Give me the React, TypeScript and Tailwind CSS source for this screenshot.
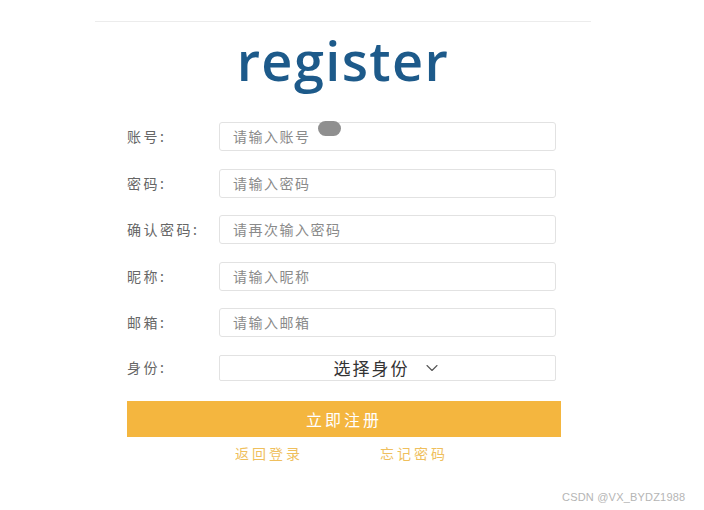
import { ChevronDown } from 'lucide-react';

const fields = [
  { label: '账号:', placeholder: '请输入账号' },
  { label: '密码:', placeholder: '请输入密码' },
  { label: '确认密码:', placeholder: '请再次输入密码' },
  { label: '昵称:', placeholder: '请输入昵称' },
  { label: '邮箱:', placeholder: '请输入邮箱' },
];

const font = { fontFamily: '"Noto Sans CJK SC", "Noto Sans", sans-serif' };

export default function App() {
  return (
    <div className="relative w-[704px] h-[510px] bg-white overflow-hidden" style={font}>
      <div className="ml-[95px] w-[496px] pt-[21px]">
        <div className="h-px bg-[#ececec]" />

        <h1
          className="mt-[7px] h-[62px] text-center text-[54px] leading-[62px] font-semibold tracking-[1.4px] text-[#1d5a8a]"
          style={{ fontFamily: '"Open Sans", "Noto Sans", sans-serif' }}
        >
          register
        </h1>

        {/* form */}
        <div className="ml-[32px] mt-[31px] flex flex-col gap-[17.6px]">
          {fields.map((f) => (
            <div key={f.label} className="flex items-center h-[29px]">
              <span className="w-[92px] text-[14px] tracking-[2.5px] text-[#666]">{f.label}</span>
              <div className="w-[337px] h-[29px] flex items-center border border-[#e2e2e2] rounded-[3px] pl-[13px] text-[14px] tracking-[1.5px] text-[#8a8a8a]">
                {f.placeholder}
              </div>
            </div>
          ))}
          <div className="flex items-center h-[26px]">
            <span className="w-[92px] text-[14px] tracking-[2.5px] text-[#666]">身份:</span>
            <div className="w-[337px] h-[26px] flex items-center justify-center gap-[12px] border border-[#e2e2e2] rounded-[2px] text-[17px] tracking-[2px] text-[#333]">
              <span>选择身份</span>
              <ChevronDown size={20} strokeWidth={1.3} className="text-[#555]" />
            </div>
          </div>
        </div>

        <div className="ml-[32px] mt-[20px] w-[434px] h-[36px] bg-[#f4b63f] flex items-center justify-center text-[16px] tracking-[3px] text-white">
          立即注册
        </div>

        <div className="ml-[32px] mt-[6px] w-[434px] flex text-[14px] tracking-[3px] text-[#efbf5d]">
          <span className="ml-[108px]">返回登录</span>
          <span className="ml-[77px]">忘记密码</span>
        </div>
      </div>

      {/* cursor dot */}
      <div className="absolute left-[318px] top-[121px] w-[23px] h-[15px] rounded-full bg-[#8f8f8f]" />

      <div
        className="absolute left-[562px] top-[489px] text-[11px] tracking-[0.2px] text-[#b5b5b5]"
        style={{ fontFamily: '"Liberation Sans", sans-serif' }}
      >
        CSDN @VX_BYDZ1988
      </div>
    </div>
  );
}
